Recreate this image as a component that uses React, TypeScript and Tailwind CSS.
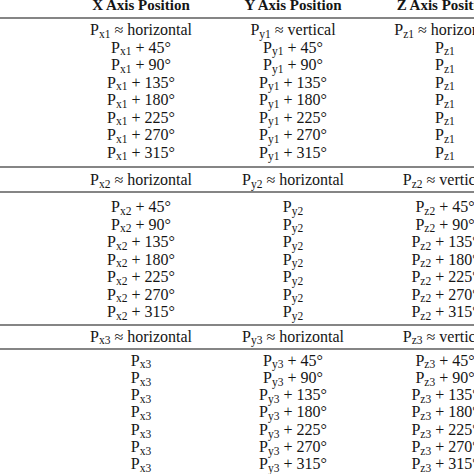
const ANGLES = ['45', '90', '135', '180', '225', '270', '315']

function P({ s }: { s: string }) {
  return (
    <>
      P<sub className="text-[11.5px]">{s}</sub>
    </>
  )
}

function Cell({ s, text, angle }: { s: string; text?: string; angle?: string }) {
  return (
    <div className="text-center whitespace-nowrap">
      <P s={s} />
      {text && <> ≈ {text}</>}
      {angle && <> + {angle}°</>}
    </div>
  )
}

const Rule = () => <div className="h-[2px] bg-[#858585]" />

const COLS = 'grid grid-cols-[66px_150px_154px_150px]'

export default function App() {
  return (
    <div className="w-[474px] h-[474px] overflow-hidden bg-white text-[#151515] font-serif">
      <div className="w-[560px] font-[Liberation_Serif,Times_New_Roman,serif]">
        {/* column headers */}
        <div className={`${COLS} -mt-[3px] pb-[4px] text-[15px] leading-[16px] font-bold`}>
          <div />
          <div className="text-center whitespace-nowrap">X Axis Position</div>
          <div className="text-center whitespace-nowrap">Y Axis Position</div>
          <div className="text-center whitespace-nowrap">Z Axis Position</div>
        </div>
        <Rule />

        <div className="text-[16px] leading-[17.5px]">
          {/* group 1 */}
          <div className={`${COLS} pt-[2px] pb-[5px]`}>
            <div />
            <div>
              <Cell s="x1" text="horizontal" />
              {ANGLES.map(a => <Cell key={a} s="x1" angle={a} />)}
            </div>
            <div>
              <Cell s="y1" text="vertical" />
              {ANGLES.map(a => <Cell key={a} s="y1" angle={a} />)}
            </div>
            <div>
              <Cell s="z1" text="horizontal" />
              {ANGLES.map(a => <Cell key={a} s="z1" />)}
            </div>
          </div>
          <Rule />

          {/* group 2 */}
          <div className={`${COLS} h-[23px] leading-[23px]`}>
            <div />
            <Cell s="x2" text="horizontal" />
            <Cell s="y2" text="horizontal" />
            <Cell s="z2" text="vertical" />
          </div>
          <Rule />
          <div className={`${COLS} pt-[5px] pb-[3px]`}>
            <div />
            <div>{ANGLES.map(a => <Cell key={a} s="x2" angle={a} />)}</div>
            <div>{ANGLES.map(a => <Cell key={a} s="y2" />)}</div>
            <div>{ANGLES.map(a => <Cell key={a} s="z2" angle={a} />)}</div>
          </div>
          <Rule />

          {/* group 3 */}
          <div className={`${COLS} h-[22px] leading-[22px]`}>
            <div />
            <Cell s="x3" text="horizontal" />
            <Cell s="y3" text="horizontal" />
            <Cell s="z3" text="vertical" />
          </div>
          <Rule />
          <div className={`${COLS} pt-[2px] leading-[17.3px]`}>
            <div />
            <div>{ANGLES.map(a => <Cell key={a} s="x3" />)}</div>
            <div>{ANGLES.map(a => <Cell key={a} s="y3" angle={a} />)}</div>
            <div>{ANGLES.map(a => <Cell key={a} s="z3" angle={a} />)}</div>
          </div>
        </div>
      </div>
    </div>
  )
}
